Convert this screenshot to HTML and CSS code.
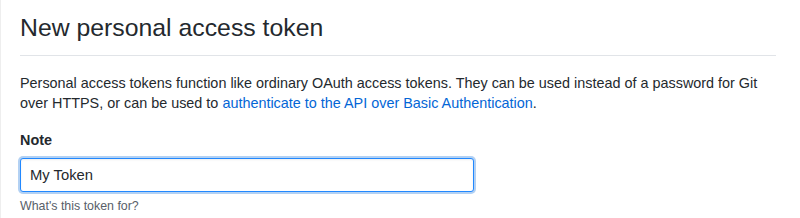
FILE: index.html
```html
<!DOCTYPE html>
<html lang="en">
<head>
    <meta charset="UTF-8">
    <title>New personal access token</title>
    <link rel="stylesheet" href="styles.css">
</head>
<body>
    <div class="page">
        <div class="subhead">
            <h2 class="subhead-heading">New personal access token</h2>
        </div>

        <p class="intro">
            Personal access tokens function like ordinary OAuth access tokens. They can be used instead of a password for Git
            over HTTPS, or can be used to <a href="#">authenticate to the API over Basic Authentication</a>.
        </p>

        <!-- Note field -->
        <div class="form-group">
            <label class="form-label" for="note">Note</label>
            <div class="input-wrap">
                <input id="note" class="form-control" type="text" value="My Token">
            </div>
            <p class="note">What's this token for?</p>
        </div>
    </div>
</body>
</html>
```

FILE: styles.css
```css
body {
    margin: 0;
    padding: 0;
    font-family: "Liberation Sans", Arial, sans-serif;
    font-size: 14.4px;
    line-height: 1.5;
    color: #24292e;
    background-color: #fff;
}

.page {
    border-left: 1px solid #eee;
    padding: 0 24px 0 19px;
    height: 218px;
    box-sizing: border-box;
}

.subhead {
    padding-top: 10px;
    padding-bottom: 9px;
    border-bottom: 1px solid #e1e4e8;
    margin-bottom: 17px;
}

.subhead-heading {
    margin: 0;
    font-size: 24.8px;
    font-weight: normal;
    line-height: 36px;
}

.intro {
    margin: 0 0 17px;
    line-height: 20px;
}

.intro a {
    color: #0366d6;
    text-decoration: none;
}

.form-label {
    display: block;
    font-weight: bold;
    line-height: 20px;
    margin-bottom: 8px;
}

.form-control {
    display: block;
    box-sizing: border-box;
    width: 454px;
    height: 34px;
    margin: 0;
    padding: 6px 9px;
    font-family: inherit;
    font-size: 14.8px;
    color: #24292e;
    border: 1px solid #2188ff;
    border-radius: 3px;
    outline: none;
    box-shadow: inset 0 1px 2px rgba(27, 31, 35, 0.075), 0 0 0 2px rgba(3, 102, 214, 0.3);
}

.note {
    margin: 5px 0 0;
    font-size: 12.4px;
    line-height: 18px;
    color: #586069;
}
```
